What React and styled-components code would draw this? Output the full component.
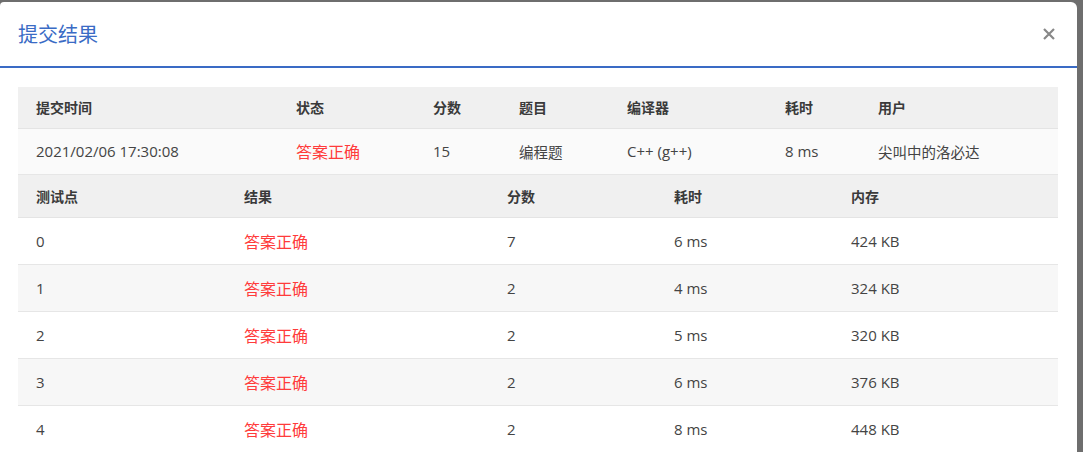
import React from "react";
import styled, { createGlobalStyle } from "styled-components";

const GlobalStyle = createGlobalStyle`
  html, body {
    margin: 0;
    padding: 0;
    background: #6e6e6e;
    overflow: hidden;
  }
  body {
    font-family: "Noto Sans CJK SC", "Open Sans", "Noto Sans", sans-serif;
    color: #333;
  }
`;

const Backdrop = styled.div`
  height: 452px;
  padding-top: 2px;
  box-sizing: border-box;
`;

const Modal = styled.div`
  width: 1077px;
  height: 460px;
  background: #fff;
  border-radius: 4px 6px 0 0;
  overflow: hidden;
`;

const Header = styled.div`
  display: flex;
  align-items: center;
  justify-content: space-between;
  height: 64px;
  padding: 0 18px;
  border-bottom: 2px solid #3a6bc5;
`;

const Title = styled.h3`
  margin: 0;
  font-size: 20px;
  font-weight: 400;
  color: #3a6bc5;
  line-height: 1;
`;

const Close = styled.button`
  border: none;
  background: none;
  padding: 0;
  width: 16px;
  height: 16px;
  margin-right: 2px;
  display: flex;
  align-items: center;
  justify-content: center;
  cursor: pointer;
`;

const Body = styled.div`
  padding: 19px 19px 0 18px;
`;

const Table = styled.table`
  width: 1040px;
  border-collapse: collapse;
  table-layout: fixed;
`;

const Th = styled.th`
  text-align: left;
  font-weight: 700;
  font-size: 14px;
  color: #3a3a3a;
  background: #f0f0f0;
  height: ${(p) => p.$h || 41}px;
  padding: 0 0 0 18px;
  border-bottom: 1px solid #e4e4e4;
  box-sizing: border-box;
`;

const Row = styled.tr`
  background: ${(p) => p.$bg};
`;

const Td = styled.td`
  font-size: ${(p) => (p.$red ? 16 : p.$cjk ? 14.5 : 15)}px;
  color: ${(p) => (p.$red ? "#ff3b3b" : "#444")};
  height: ${(p) => p.$h || 47}px;
  padding: 0 0 0 18px;
  border-bottom: 1px solid #e6e6e6;
  box-sizing: border-box;
  white-space: nowrap;
  font-family: ${(p) =>
    p.$cjk
      ? '"Noto Sans CJK SC", sans-serif'
      : '"Open Sans", "Noto Sans CJK SC", sans-serif'};
`;

const submitCols = [
  { label: "提交时间", w: 260 },
  { label: "状态", w: 137 },
  { label: "分数", w: 86 },
  { label: "题目", w: 108 },
  { label: "编译器", w: 158 },
  { label: "耗时", w: 93 },
  { label: "用户", w: 198 },
];

const caseCols = [
  { label: "测试点", w: 208 },
  { label: "结果", w: 263 },
  { label: "分数", w: 167 },
  { label: "耗时", w: 177 },
  { label: "内存", w: 225 },
];

const cases = [
  { id: 0, score: 7, time: "6 ms", mem: "424 KB" },
  { id: 1, score: 2, time: "4 ms", mem: "324 KB" },
  { id: 2, score: 2, time: "5 ms", mem: "320 KB" },
  { id: 3, score: 2, time: "6 ms", mem: "376 KB" },
  { id: 4, score: 2, time: "8 ms", mem: "448 KB" },
];

function CloseIcon() {
  return (
    <svg width="12" height="12" viewBox="0 0 12 12">
      <path
        d="M1 1 L11 11 M11 1 L1 11"
        stroke="#888"
        strokeWidth="2.2"
        strokeLinecap="butt"
      />
    </svg>
  );
}

export default function App() {
  return (
    <>
      <GlobalStyle />
      <Backdrop>
        <Modal>
          <Header>
            <Title>提交结果</Title>
            <Close aria-label="close">
              <CloseIcon />
            </Close>
          </Header>
          <Body>
            <Table>
              <colgroup>
                {submitCols.map((c) => (
                  <col key={c.label} style={{ width: c.w }} />
                ))}
              </colgroup>
              <thead>
                <tr>
                  {submitCols.map((c) => (
                    <Th key={c.label}>{c.label}</Th>
                  ))}
                </tr>
              </thead>
              <tbody>
                <Row $bg="#fafafa">
                  <Td $h={46}>2021/02/06 17:30:08</Td>
                  <Td $h={46} $red $cjk>
                    答案正确
                  </Td>
                  <Td $h={46}>15</Td>
                  <Td $h={46} $cjk>
                    编程题
                  </Td>
                  <Td $h={46}>C++ (g++)</Td>
                  <Td $h={46}>8 ms</Td>
                  <Td $h={46} $cjk>
                    尖叫中的洛必达
                  </Td>
                </Row>
              </tbody>
            </Table>
            <Table>
              <colgroup>
                {caseCols.map((c) => (
                  <col key={c.label} style={{ width: c.w }} />
                ))}
              </colgroup>
              <thead>
                <tr>
                  {caseCols.map((c) => (
                    <Th key={c.label} $h={43}>
                      {c.label}
                    </Th>
                  ))}
                </tr>
              </thead>
              <tbody>
                {cases.map((r, i) => (
                  <Row key={r.id} $bg={i % 2 ? "#f7f7f7" : "#fff"}>
                    <Td>{r.id}</Td>
                    <Td $red $cjk>
                      答案正确
                    </Td>
                    <Td>{r.score}</Td>
                    <Td>{r.time}</Td>
                    <Td>{r.mem}</Td>
                  </Row>
                ))}
              </tbody>
            </Table>
          </Body>
        </Modal>
      </Backdrop>
    </>
  );
}
